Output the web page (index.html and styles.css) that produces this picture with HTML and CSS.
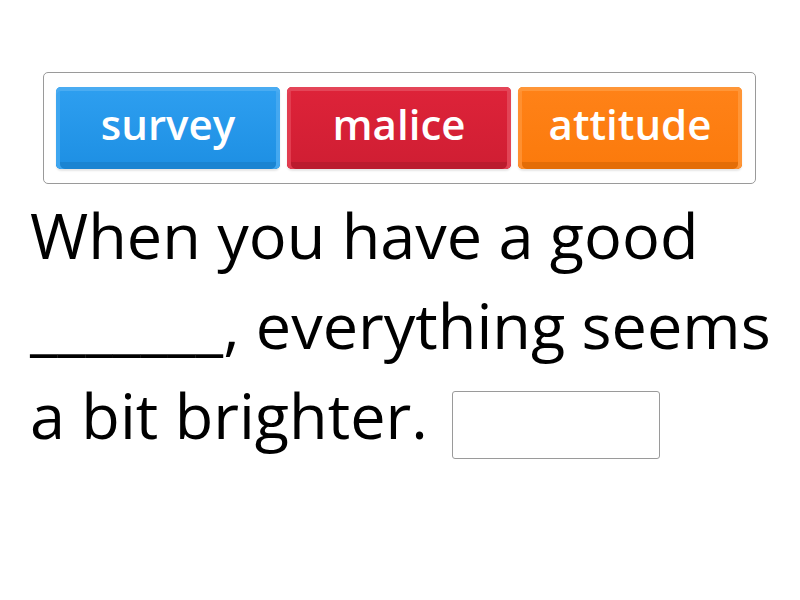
FILE: index.html
```html
<!DOCTYPE html>
<html>
<head>
<meta charset="utf-8">
<link rel="stylesheet" href="styles.css">
</head>
<body>
<div class="page">
  <div class="bank">
    <div class="tile tile-blue">survey</div>
    <div class="tile tile-red">malice</div>
    <div class="tile tile-orange">attitude</div>
  </div>
  <p class="sentence">When you have a good _______, everything seems a bit brighter. <span class="slot"></span></p>
</div>
</body>
</html>
```

FILE: styles.css
```css
html, body {
  margin: 0;
  padding: 0;
  background: #fff;
}
.page {
  width: 800px;
  height: 600px;
  box-sizing: border-box;
  padding: 72px 20px 0 30px;
  font-family: "Open Sans", "Liberation Sans", sans-serif;
}
.bank {
  margin-left: 13px;
  width: 713px;
  height: 112px;
  box-sizing: border-box;
  border: 1.5px solid #9a9a9a;
  border-radius: 5px;
  padding: 14px 12px 0 12px;
  display: flex;
  gap: 7px;
}
.tile {
  width: 224px;
  height: 82px;
  box-sizing: border-box;
  border-radius: 5px;
  color: #fff;
  font-size: 42px;
  font-weight: 600;
  display: flex;
  align-items: center;
  justify-content: center;
  padding-bottom: 10px;
}
.tile-blue {
  background: linear-gradient(#2e9ff0, #1d8fe3);
  box-shadow: inset 0 4px 0 #4aacf2, inset -4px 0 0 #44a8f0, inset 4px 0 0 #3ea6f0, inset 0 -7px 0 #1a84d2, 0 2px 2px rgba(0,0,0,0.1);
}
.tile-red {
  background: linear-gradient(#de2339, #cf1e33);
  box-shadow: inset 0 4px 0 #e44558, inset -4px 0 0 #e24456, inset 4px 0 0 #e23d50, inset 0 -7px 0 #bb1b2e, 0 2px 2px rgba(0,0,0,0.1);
}
.tile-orange {
  background: linear-gradient(#ff8218, #fb7a0c);
  box-shadow: inset 0 4px 0 #ff9638, inset -4px 0 0 #ff9536, inset 4px 0 0 #ff9030, inset 0 -7px 0 #e46d06, 0 2px 2px rgba(0,0,0,0.1);
}
.sentence {
  margin: 6px 0 0 0;
  font-size: 63px;
  line-height: 90px;
  color: #000;
}
.slot {
  display: inline-block;
  width: 208px;
  height: 68px;
  box-sizing: border-box;
  border: 1.5px solid #9a9a9a;
  border-radius: 3px;
  vertical-align: -20px;
  margin-left: 8px;
}
```
